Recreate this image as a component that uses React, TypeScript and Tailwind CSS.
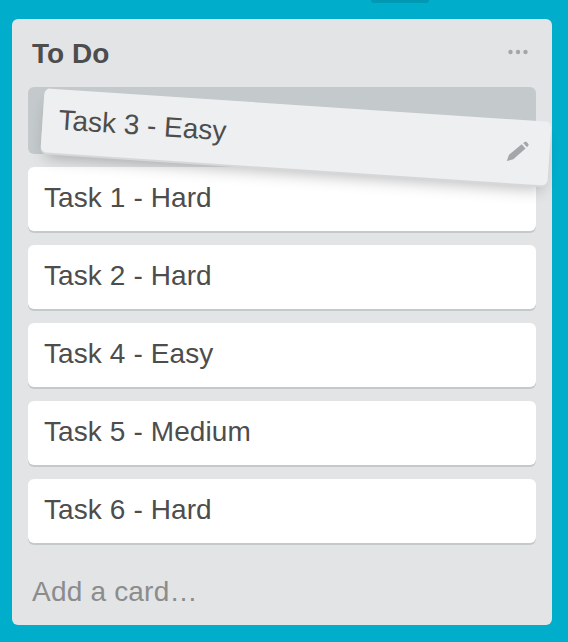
const cards = ['Task 1 - Hard', 'Task 2 - Hard', 'Task 4 - Easy', 'Task 5 - Medium', 'Task 6 - Hard'];

const Card = ({ title }: { title: string }) => (
  <div className="flex h-[64px] items-start rounded-[6px] bg-white px-4 pt-[14px] shadow-[0_2px_0_#c4c9cc]">
    <span className="leading-[34px]">{title}</span>
  </div>
);

const App = () => {
  return (
    <div className="h-[642px] w-[568px] overflow-hidden bg-[#00aecc] font-['Liberation_Sans',Arial,sans-serif] text-[28px] tracking-[0.1px] text-[#4d4d4d]">
      {/* Bit of the board header poking in at the top */}
      <div className="ml-[371px] h-[3px] w-[58px] rounded-b-[4px] bg-[#0098b3]" />

      <div className="mt-4 ml-3 flex h-[606px] w-[540px] flex-col rounded-[6px] bg-[#e2e4e6] px-4">
        <div className="flex h-[68px] items-start justify-between pt-[18px]">
          <h2 className="ml-1 text-[28px] leading-[34px] font-bold tracking-normal">To Do</h2>
          <svg width="20" height="6" viewBox="0 0 20 6" className="mt-[12px] mr-[8px] fill-[#a3a7aa]">
            <circle cx="2.5" cy="3" r="2.2" />
            <circle cx="10" cy="3" r="2.2" />
            <circle cx="17.5" cy="3" r="2.2" />
          </svg>
        </div>

        <div className="relative h-[67px] rounded-[6px] bg-[#c4c9cc]">
          <div className="absolute top-[18px] left-[13.5px] flex h-[64px] w-[508px] rotate-[3.8deg] items-start justify-between rounded-[6px] bg-[#edeff0] px-4 pt-[14px] shadow-[0_2px_0_#d5d8da,0_10px_16px_-6px_rgba(0,0,0,0.28)]">
            <span className="leading-[34px] tracking-normal">Task 3 - Easy</span>
            {/* pencil, slimmer than the material one */}
            <svg width="22" height="22" viewBox="0 0 24 24" className="mt-[7px] mr-[5px] fill-[#a3a7aa]">
              <path d="M1 23 L3 16 L16 3.5 L20.5 8 L8 20.5 Z" />
              <path d="M17.5 2 L19.5 0.6 Q20.5 0 21.3 0.8 L23.2 2.7 Q24 3.5 23.4 4.5 L22 6.5 Z" />
            </svg>
          </div>
        </div>

        <div className="mt-[13px] flex flex-col gap-[14px]">
          {cards.map((title) => (
            <Card key={title} title={title} />
          ))}
        </div>

        <div className="mt-[32px] pl-1 leading-[34px] tracking-[0.2px] text-[#8c8c8c]">Add a card…</div>
      </div>
    </div>
  );
};

export default App;
